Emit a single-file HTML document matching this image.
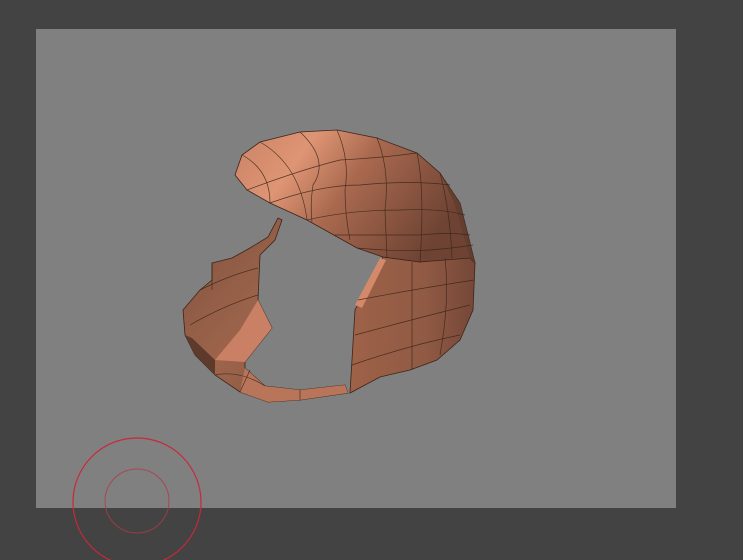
<!DOCTYPE html>
<html><head><style>
html,body{margin:0;padding:0;width:743px;height:560px;overflow:hidden;background:#434343;}
svg{display:block}
</style></head><body>
<svg width="743" height="560" viewBox="0 0 743 560" xmlns="http://www.w3.org/2000/svg">
<defs>
<linearGradient id="dome" x1="0" y1="0" x2="1" y2="0.4">
<stop offset="0" stop-color="#c98266"/>
<stop offset="0.3" stop-color="#de9574"/>
<stop offset="0.55" stop-color="#a9694f"/>
<stop offset="1" stop-color="#6e4333"/>
</linearGradient>
<linearGradient id="right" x1="0" y1="0" x2="1" y2="0">
<stop offset="0" stop-color="#9e6248"/>
<stop offset="0.6" stop-color="#905a44"/>
<stop offset="1" stop-color="#754737"/>
</linearGradient>
<linearGradient id="left" x1="0" y1="0" x2="1" y2="1">
<stop offset="0" stop-color="#84533f"/>
<stop offset="0.5" stop-color="#9c644b"/>
<stop offset="1" stop-color="#82513c"/>
</linearGradient>
</defs>
<rect x="0" y="0" width="743" height="560" fill="#434343"/>
<rect x="36" y="29" width="640" height="479" fill="#808080"/>
<polygon points="350,393 355,310 383,257 420,262 470,255 475,263 473,310 460,340 437,360 410,370 380,377" fill="url(#right)" stroke="#3a2418" stroke-width="0.8"/>
<polygon points="355,305 380,258 386,260 362,308" fill="#d4896a"/>
<polygon points="235,175 242,155 260,142 300,132 337,130 377,138 417,153 440,173 460,203 475,263 470,258 420,262 383,257 357,248 307,220 270,203 247,190" fill="url(#dome)" stroke="#3a2418" stroke-width="0.8"/>
<polygon points="440,173 460,203 475,263 470,258 455,205" fill="#5e3a2c" opacity="0.7"/>
<polygon points="212,263 232,258 250,248 268,237 278,218 282,220 275,240 260,255 258,300 272,328 245,362 245,368 265,386 300,390 345,385 348,393 300,400 268,402 240,392 215,375 195,355 185,335 183,310 200,290 212,280" fill="url(#left)" stroke="#3a2418" stroke-width="0.8"/>
<polygon points="258,300 272,328 245,362 215,360 240,330" fill="#c98064"/>
<polygon points="245,368 265,386 300,390 345,385 348,393 300,400 268,402 240,392" fill="#b87559"/>
<polygon points="185,335 195,355 215,375 215,360 192,338" fill="#5e3a2c"/>
<g fill="none" stroke="#3a2418" stroke-width="0.7" opacity="0.85">
<path d="M247,190 Q300,170 340,160 Q380,158 417,153"/>
<path d="M270,203 Q320,185 360,185 Q410,180 450,185"/>
<path d="M307,220 Q350,210 400,210 Q440,208 465,215"/>
<path d="M335,235 Q380,235 420,235 Q450,232 470,235"/>
<path d="M357,248 Q400,252 430,250 Q455,248 473,245"/>
<path d="M242,155 Q270,170 270,203"/>
<path d="M260,142 Q300,165 307,220"/>
<path d="M300,132 Q330,160 313,185 Q310,205 312,222"/>
<path d="M337,130 Q350,160 345,190 Q345,215 350,240"/>
<path d="M377,138 Q390,170 385,210 L387,258"/>
<path d="M417,153 Q425,190 420,262"/>
<path d="M440,173 Q450,210 452,258"/>
<path d="M355,335 Q410,320 470,305"/>
<path d="M352,365 Q410,345 460,335"/>
<path d="M358,300 Q410,290 474,280"/>
<path d="M412,262 L412,370"/>
<path d="M445,258 Q450,300 440,355"/>
<path d="M200,290 Q230,275 258,268"/>
<path d="M190,325 Q225,305 258,295"/>
<path d="M212,263 L212,290"/>
<path d="M240,392 L250,370"/>
<path d="M300,390 L300,400"/>
<path d="M215,375 Q240,370 265,386"/>
</g>
<circle cx="137" cy="502" r="64" fill="none" stroke="#c8283a" stroke-width="1.2"/>
<circle cx="137" cy="501" r="32" fill="none" stroke="#b03a48" stroke-width="1" opacity="0.8"/>
</svg>
</body></html>
